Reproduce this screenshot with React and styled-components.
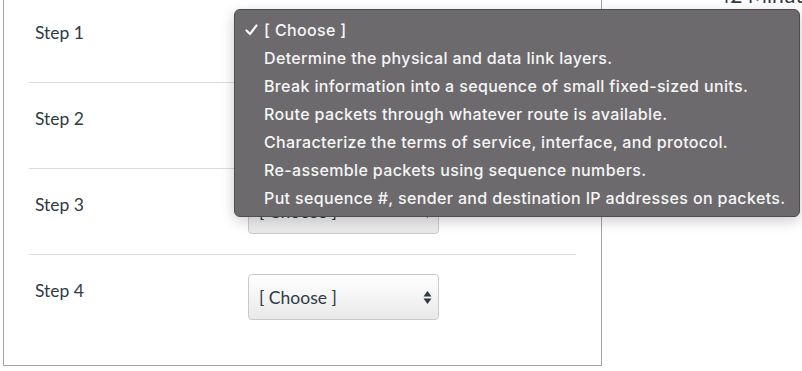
import React from "react";
import styled, { createGlobalStyle } from "styled-components";

const Global = createGlobalStyle`
  html, body {
    margin: 0;
    padding: 0;
    background: #fff;
    overflow: hidden;
  }
  body {
    font-family: Lato, "Liberation Sans", sans-serif;
    color: #2d3b45;
  }
`;

const Page = styled.div`
  position: relative;
  display: flex;
  align-items: flex-start;
  width: 802px;
  height: 371px;
  padding-left: 3px;
  box-sizing: border-box;
  overflow: hidden;
`;

const Panel = styled.div`
  flex: 0 0 599px;
  width: 599px;
  box-sizing: border-box;
  margin-top: -3px;
  border: 1px solid #a5a5a5;
  border-top: none;
  padding: 0 25px 25px 25px;
`;

const Row = styled.div`
  display: flex;
  align-items: flex-start;
  padding: 19px 6px 20px;
  border-bottom: 1px solid #dcdcdc;

  &:last-child {
    border-bottom: none;
  }
`;

const Label = styled.div`
  flex: 0 0 213px;
  padding-top: 6px;
  font-size: 17.5px;
  line-height: 22px;
  color: #2d3b45;
`;

const Select = styled.div`
  display: flex;
  align-items: center;
  justify-content: space-between;
  width: 191px;
  height: 46px;
  box-sizing: border-box;
  padding: 0 6px 0 10px;
  border: 1px solid #c9c9c9;
  border-radius: 4px;
  background: linear-gradient(#ffffff, #e9e9e9);
  font-size: 17.5px;
  color: #2d3b45;
`;

const Side = styled.div`
  flex: 1 1 auto;
  min-width: 0;
  margin-top: -16px;
  padding-left: 116px;
  font-size: 21px;
  line-height: 22px;
  color: #2d3b45;
  white-space: nowrap;
  overflow: hidden;
`;

const Menu = styled.ul`
  position: absolute;
  left: 234px;
  top: 9px;
  width: 566px;
  margin: 0;
  padding: 6px 0 4px;
  list-style: none;
  box-sizing: border-box;
  background: #6c6a6d;
  border: 1px solid #4e4d4f;
  border-radius: 6px;
  box-shadow: 0 4px 14px rgba(0, 0, 0, 0.2);
  font-family: Inter, "Open Sans", sans-serif;
  font-size: 16px;
  font-weight: 500;
  letter-spacing: 0.36px;
  color: #f6f6f6;
`;

const Item = styled.li`
  display: flex;
  align-items: center;
  height: 28px;
  padding-left: 10px;
  white-space: nowrap;
`;

const Check = styled.span`
  display: inline-flex;
  width: 19px;
  visibility: ${(p) => (p.$on ? "visible" : "hidden")};
`;

const Arrows = () => (
  <svg width="9" height="15" viewBox="0 0 9 15">
    <path d="M4.5 1 L8.5 6.5 L0.5 6.5 Z" fill="#2d3b45" />
    <path d="M4.5 14 L8.5 8.5 L0.5 8.5 Z" fill="#2d3b45" />
  </svg>
);

const Tick = () => (
  <svg width="13" height="12" viewBox="0 0 13 12">
    <path
      d="M1.5 6.5 L5 10 L11.5 1.5"
      fill="none"
      stroke="#f6f6f6"
      strokeWidth="2.2"
      strokeLinecap="round"
      strokeLinejoin="round"
    />
  </svg>
);

const options = [
  "[ Choose ]",
  "Determine the physical and data link layers.",
  "Break information into a sequence of small fixed-sized units.",
  "Route packets through whatever route is available.",
  "Characterize the terms of service, interface, and protocol.",
  "Re-assemble packets using sequence numbers.",
  "Put sequence #, sender and destination IP addresses on packets.",
];

export default function App() {
  return (
    <Page>
      <Global />
      <Panel>
        {[1, 2, 3, 4].map((n) => (
          <Row key={n}>
            <Label>Step {n}</Label>
            <Select>
              <span>[ Choose ]</span>
              <Arrows />
            </Select>
          </Row>
        ))}
      </Panel>
      <Side>42 Minutes</Side>
      <Menu>
        {options.map((o, i) => (
          <Item key={o}>
            <Check $on={i === 0}>
              <Tick />
            </Check>
            {o}
          </Item>
        ))}
      </Menu>
    </Page>
  );
}
